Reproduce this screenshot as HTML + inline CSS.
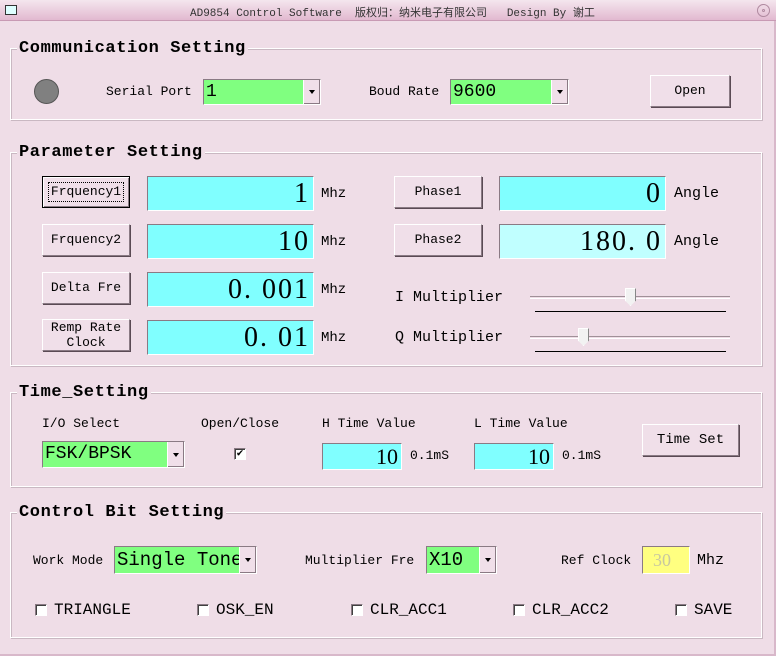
<!DOCTYPE html>
<html><head><meta charset="utf-8">
<style>
*{margin:0;padding:0;box-sizing:border-box}
body{width:776px;height:656px;background:#efdde7;position:relative;overflow:hidden;font-family:"Liberation Mono","Noto Sans CJK SC",monospace;color:#000}
.a{position:absolute;white-space:nowrap}
.t{font-size:13px;line-height:16px}
.title{background:linear-gradient(#f4e6ee,#e2b9d0);height:21px;left:0;top:0;width:776px;border-bottom:1px solid #c89ab4}
.grp{position:absolute;border:1px solid #fff;box-shadow:inset 1px 1px 0 #c9b8c2,1px 1px 0 #c9b8c2}
.gt{position:absolute;background:#efdde7;font-weight:bold;font-size:17px;letter-spacing:0.6px;line-height:20px;padding:0 2px}
.btn{position:absolute;background:#f0dfe9;border:1px solid;border-color:#fff #8a7a84 #8a7a84 #fff;box-shadow:1px 1px 0 #5a4a54;font-size:13px;text-align:center;display:flex;align-items:center;justify-content:center;line-height:16px}
.fld{position:absolute;background:#80ffff;border:1px solid;border-color:#8a7a84 #fff #fff #8a7a84;text-align:right;font-family:"Liberation Serif",serif;padding-right:3px}
.big{font-size:28px;line-height:33px;letter-spacing:2px}
.cb{position:absolute;background:#80ff80;border:1px solid;border-color:#8a7a84 #fff #fff #8a7a84;font-size:18px;padding-left:2px;line-height:24px}
.arr{position:absolute;right:0;top:0;bottom:0;width:17px;background:#f0dfe9;border-left:1px solid #fff;box-shadow:inset -1px -1px 0 #8a7a84}
.arr:after{content:"";position:absolute;left:5px;top:50%;margin-top:-2px;border:3px solid transparent;border-top:4px solid #000;border-bottom:0}
.chk{position:absolute;width:12px;height:12px;background:#fff;border:1px solid;border-color:#8a7a84 #fff #fff #8a7a84;box-shadow:inset 1px 1px 0 #404040}
.track{position:absolute;height:3px;border-top:1px solid #a09098;border-bottom:1px solid #fff}
.thumb{position:absolute;width:11px;height:18px;background:#f2f2f2;border:1px solid #fff;border-right-color:#888;clip-path:polygon(0 0,100% 0,100% 70%,50% 100%,0 70%)}
</style></head><body>
<div class="a title"></div>
<div class="a" style="left:5px;top:5px;width:12px;height:10px;border:1px solid #333;background:#dff"></div>
<div class="a" style="left:190px;top:4px;font-size:11px;color:#333;font-family:'Liberation Mono','Noto Sans CJK SC',monospace">AD9854 Control Software&nbsp; 版权归：纳米电子有限公司&nbsp;&nbsp; Design By 谢工</div>
<div class="a" style="left:757px;top:4px;width:13px;height:13px;border:1px solid #b08aa0;border-radius:50%"></div>
<div class="a" style="left:762px;top:9px;width:3px;height:3px;border:1px solid #b08aa0;border-radius:50%"></div>
<div class="a" style="right:0;top:21px;width:2px;height:635px;background:#d8b8ca"></div>
<div class="a" style="left:0;top:654px;width:776px;height:2px;background:#d8b8ca"></div>

<!-- Communication -->
<div class="grp" style="left:10px;top:48px;width:752px;height:72px"></div>
<div class="gt" style="left:17px;top:39px">Communication Setting</div>
<div class="a" style="left:34px;top:79px;width:25px;height:25px;border-radius:50%;background:#808080;border:1px solid #555"></div>
<div class="a t" style="left:106px;top:84px">Serial Port</div>
<div class="cb" style="left:203px;top:79px;width:118px;height:26px">1<div class="arr"></div></div>
<div class="a t" style="left:369px;top:84px">Boud Rate</div>
<div class="cb" style="left:450px;top:79px;width:119px;height:26px">9600<div class="arr"></div></div>
<div class="btn" style="left:650px;top:75px;width:80px;height:32px">Open</div>

<!-- Parameter -->
<div class="grp" style="left:10px;top:152px;width:752px;height:214px"></div>
<div class="gt" style="left:17px;top:143px">Parameter Setting</div>
<div class="btn" style="left:42px;top:176px;width:88px;height:32px;border:1px solid #000;box-shadow:inset 1px 1px 0 #fff,inset -1px -1px 0 #8a7a84"><span style="outline:1px dotted #000;padding:1px 2px">Frquency1</span></div>
<div class="btn" style="left:42px;top:224px;width:88px;height:32px">Frquency2</div>
<div class="btn" style="left:42px;top:272px;width:88px;height:32px">Delta Fre</div>
<div class="btn" style="left:42px;top:319px;width:88px;height:32px;font-size:13px;line-height:15px">Remp Rate<br>Clock</div>
<div class="fld big" style="left:147px;top:176px;width:167px;height:35px">1</div>
<div class="fld big" style="left:147px;top:224px;width:167px;height:35px">10</div>
<div class="fld big" style="left:147px;top:272px;width:167px;height:35px">0.&nbsp;001</div>
<div class="fld big" style="left:147px;top:320px;width:167px;height:35px">0.&nbsp;01</div>
<div class="a t" style="left:321px;top:186px;font-size:14px">Mhz</div>
<div class="a t" style="left:321px;top:234px;font-size:14px">Mhz</div>
<div class="a t" style="left:321px;top:282px;font-size:14px">Mhz</div>
<div class="a t" style="left:321px;top:330px;font-size:14px">Mhz</div>
<div class="btn" style="left:394px;top:176px;width:88px;height:32px">Phase1</div>
<div class="btn" style="left:394px;top:224px;width:88px;height:32px">Phase2</div>
<div class="fld big" style="left:499px;top:176px;width:167px;height:35px">0</div>
<div class="fld big" style="left:499px;top:224px;width:167px;height:35px;background:#c0ffff">180.&nbsp;0</div>
<div class="a t" style="left:674px;top:186px;font-size:15px">Angle</div>
<div class="a t" style="left:674px;top:234px;font-size:15px">Angle</div>
<div class="a t" style="left:395px;top:290px;font-size:15px">I Multiplier</div>
<div class="a t" style="left:395px;top:330px;font-size:15px">Q Multiplier</div>
<div class="track" style="left:530px;top:296px;width:200px"></div>
<div class="a" style="left:535px;top:311px;width:191px;height:1px;background:#000"></div>
<div class="thumb" style="left:625px;top:288px"></div>
<div class="track" style="left:530px;top:336px;width:200px"></div>
<div class="a" style="left:535px;top:351px;width:191px;height:1px;background:#000"></div>
<div class="thumb" style="left:578px;top:328px"></div>

<!-- Time -->
<div class="grp" style="left:10px;top:392px;width:752px;height:95px"></div>
<div class="gt" style="left:17px;top:383px">Time_Setting</div>
<div class="a t" style="left:42px;top:416px">I/O Select</div>
<div class="cb" style="left:42px;top:441px;width:143px;height:27px">FSK/BPSK<div class="arr"></div></div>
<div class="a t" style="left:201px;top:416px">Open/Close</div>
<div class="chk" style="left:234px;top:448px;font-size:11px;line-height:10px;text-align:center">✔</div>
<div class="a t" style="left:322px;top:416px">H Time Value</div>
<div class="fld" style="left:322px;top:443px;width:80px;height:27px;font-size:22px;line-height:25px">10</div>
<div class="a t" style="left:410px;top:448px;font-size:13px">0.1mS</div>
<div class="a t" style="left:474px;top:416px">L Time Value</div>
<div class="fld" style="left:474px;top:443px;width:80px;height:27px;font-size:22px;line-height:25px">10</div>
<div class="a t" style="left:562px;top:448px;font-size:13px">0.1mS</div>
<div class="btn" style="left:642px;top:424px;width:97px;height:32px;font-size:14px">Time Set</div>

<!-- Control -->
<div class="grp" style="left:10px;top:512px;width:752px;height:126px"></div>
<div class="gt" style="left:17px;top:503px">Control Bit Setting</div>
<div class="a t" style="left:33px;top:553px">Work Mode</div>
<div class="cb" style="left:114px;top:546px;width:143px;height:28px;font-size:19px;line-height:26px">Single Tone<div class="arr"></div></div>
<div class="a t" style="left:305px;top:553px">Multiplier Fre</div>
<div class="cb" style="left:426px;top:546px;width:71px;height:28px;font-size:19px;line-height:26px">X10<div class="arr"></div></div>
<div class="a t" style="left:561px;top:553px">Ref Clock</div>
<div class="fld" style="left:642px;top:546px;width:48px;height:28px;background:#ffff80;text-align:left;padding-left:10px;color:#c8c8a0;font-size:18px;line-height:26px">30</div>
<div class="a t" style="left:697px;top:553px;font-size:15px">Mhz</div>
<div class="chk" style="left:35px;top:604px"></div><div class="a t" style="left:54px;top:602px;font-size:16px">TRIANGLE</div>
<div class="chk" style="left:197px;top:604px"></div><div class="a t" style="left:216px;top:602px;font-size:16px">OSK_EN</div>
<div class="chk" style="left:351px;top:604px"></div><div class="a t" style="left:370px;top:602px;font-size:16px">CLR_ACC1</div>
<div class="chk" style="left:513px;top:604px"></div><div class="a t" style="left:532px;top:602px;font-size:16px">CLR_ACC2</div>
<div class="chk" style="left:675px;top:604px"></div><div class="a t" style="left:694px;top:602px;font-size:16px">SAVE</div>
</body></html>
